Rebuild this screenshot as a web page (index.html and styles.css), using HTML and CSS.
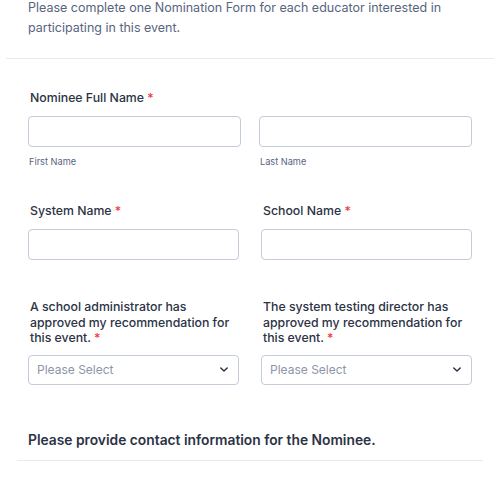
FILE: index.html
```
<!DOCTYPE html>
<html lang="en">
<head>
    <meta charset="UTF-8">
    <meta name="viewport" content="width=device-width, initial-scale=1.0">
    <title>Nomination Form</title>
    <link rel="stylesheet" href="styles.css">
</head>
<body>
    <p class="intro">Please complete one Nomination Form for each educator interested in participating in this event.</p>
    <hr class="divider">

    <form class="form-body">
        <div class="field field-name">
            <label class="field-label">Nominee Full Name <span class="req">*</span></label>
            <div class="field-row field-row-tight">
                <div>
                    <input type="text" class="text-input" aria-label="First Name">
                    <span class="sub-label">First Name</span>
                </div>
                <div>
                    <input type="text" class="text-input" aria-label="Last Name">
                    <span class="sub-label">Last Name</span>
                </div>
            </div>
        </div>

        <div class="field-row field-system">
            <div class="field">
                <label class="field-label">System Name <span class="req">*</span></label>
                <input type="text" class="text-input">
            </div>
            <div class="field">
                <label class="field-label">School Name <span class="req">*</span></label>
                <input type="text" class="text-input">
            </div>
        </div>

        <div class="field-row field-approval">
            <div class="field">
                <label class="field-label multi">A school administrator has approved my recommendation for this event. <span class="req">*</span></label>
                <div class="select-box">
                    <span>Please Select</span>
                    <svg class="chevron" viewBox="0 0 10 6" aria-hidden="true">
                        <polyline points="1 1 5 5 9 1"></polyline>
                    </svg>
                </div>
            </div>
            <div class="field">
                <label class="field-label multi">The system testing director has approved my recommendation for this event. <span class="req">*</span></label>
                <div class="select-box">
                    <span>Please Select</span>
                    <svg class="chevron" viewBox="0 0 10 6" aria-hidden="true">
                        <polyline points="1 1 5 5 9 1"></polyline>
                    </svg>
                </div>
            </div>
        </div>

        <h2 class="section-title">Please provide contact information for the Nominee.</h2>
    </form>
    <hr class="divider divider-inner">
</body>
</html>
```

FILE: styles.css
```
:root {
    --text-dark: #2c3345;
    --text-muted: #57647e;
    --text-light: #8894ab;
    --input-border: #c5ccd9;
    --line: #e9eaee;
    --required: #f23a3c;
}

*, *::before, *::after {
    box-sizing: border-box;
    margin: 0;
    padding: 0;
}

body {
    font-family: Inter, "Noto Sans", sans-serif;
    background: #ffffff;
    color: var(--text-dark);
    width: 500px;
    overflow: hidden;
}

/* Intro */
.intro {
    margin-top: -2px;
    padding: 0 28px;
    font-size: 12.5px;
    line-height: 20px;
    color: var(--text-muted);
}

.divider {
    border: none;
    border-top: 1px solid var(--line);
    margin: 20px 6px 0;
}

.divider-inner {
    margin: 10px 17px 0;
}

/* Form */
.form-body {
    padding: 0 28px;
}

.field-name {
    margin-top: 29px;
}

.field-label {
    display: block;
    padding-left: 2px;
    font-size: 12.3px;
    line-height: 20px;
    font-weight: 500;
    color: var(--text-dark);
    margin-bottom: 8px;
}

.field-label.multi {
    line-height: 15.5px;
    margin-bottom: 9px;
}

.req {
    color: var(--required);
}

.field-row {
    display: grid;
    grid-template-columns: 1fr 1fr;
    column-gap: 22px;
}

.field-row-tight {
    column-gap: 18px;
}

.field-system {
    margin-top: 32px;
}

.field-approval {
    margin-top: 39px;
}

.text-input {
    display: block;
    width: 100%;
    height: 31px;
    border: 1px solid var(--input-border);
    border-radius: 4px;
    background: #fff;
}

.sub-label {
    display: block;
    margin-top: 8px;
    padding-left: 1px;
    font-size: 9.2px;
    line-height: 14px;
    color: var(--text-muted);
}

.select-box {
    height: 30px;
    border: 1px solid var(--input-border);
    border-radius: 4px;
    display: flex;
    align-items: center;
    justify-content: space-between;
    padding: 0 10px 0 8px;
    font-size: 12px;
    color: #8d95a8;
}

.chevron {
    width: 8px;
    height: 5px;
    fill: none;
    stroke: #2c3345;
    stroke-width: 1.8;
    stroke-linecap: round;
    stroke-linejoin: round;
}

.section-title {
    margin-top: 45px;
    font-size: 13.8px;
    line-height: 20px;
    font-weight: 600;
    color: var(--text-dark);
}
```
